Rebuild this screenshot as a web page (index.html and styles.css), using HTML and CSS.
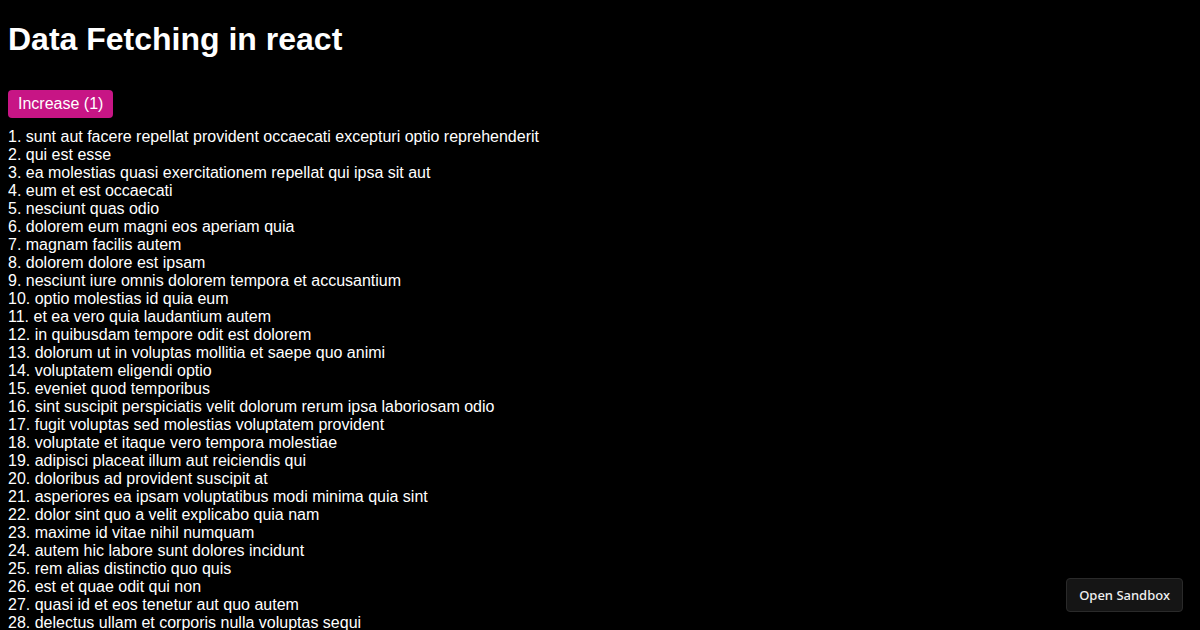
FILE: index.html
```html
<!DOCTYPE html>
<html lang="en">
<head>
  <meta charset="UTF-8">
  <meta name="viewport" content="width=device-width, initial-scale=1.0">
  <title>Data Fetching in react</title>
  <link rel="stylesheet" href="styles.css">
</head>
<body>
  <div class="app">
    <h1>Data Fetching in react</h1>
    <button class="increase-btn">Increase (1)</button>
    <div class="posts">
      <div class="post">1. sunt aut facere repellat provident occaecati excepturi optio reprehenderit</div>
      <div class="post">2. qui est esse</div>
      <div class="post">3. ea molestias quasi exercitationem repellat qui ipsa sit aut</div>
      <div class="post">4. eum et est occaecati</div>
      <div class="post">5. nesciunt quas odio</div>
      <div class="post">6. dolorem eum magni eos aperiam quia</div>
      <div class="post">7. magnam facilis autem</div>
      <div class="post">8. dolorem dolore est ipsam</div>
      <div class="post">9. nesciunt iure omnis dolorem tempora et accusantium</div>
      <div class="post">10. optio molestias id quia eum</div>
      <div class="post">11. et ea vero quia laudantium autem</div>
      <div class="post">12. in quibusdam tempore odit est dolorem</div>
      <div class="post">13. dolorum ut in voluptas mollitia et saepe quo animi</div>
      <div class="post">14. voluptatem eligendi optio</div>
      <div class="post">15. eveniet quod temporibus</div>
      <div class="post">16. sint suscipit perspiciatis velit dolorum rerum ipsa laboriosam odio</div>
      <div class="post">17. fugit voluptas sed molestias voluptatem provident</div>
      <div class="post">18. voluptate et itaque vero tempora molestiae</div>
      <div class="post">19. adipisci placeat illum aut reiciendis qui</div>
      <div class="post">20. doloribus ad provident suscipit at</div>
      <div class="post">21. asperiores ea ipsam voluptatibus modi minima quia sint</div>
      <div class="post">22. dolor sint quo a velit explicabo quia nam</div>
      <div class="post">23. maxime id vitae nihil numquam</div>
      <div class="post">24. autem hic labore sunt dolores incidunt</div>
      <div class="post">25. rem alias distinctio quo quis</div>
      <div class="post">26. est et quae odit qui non</div>
      <div class="post">27. quasi id et eos tenetur aut quo autem</div>
      <div class="post">28. delectus ullam et corporis nulla voluptas sequi</div>
      <div class="post">29. iusto eius quod necessitatibus culpa ea</div>
      <div class="post">30. a quo magni similique perferendis</div>
    </div>
  </div>

  <a class="sandbox-btn" href="#">Open Sandbox</a>
</body>
</html>
```

FILE: styles.css
```css
body {
  margin: 8px;
  background: #000;
  color: #fff;
  font-family: 'Liberation Sans', Arial, sans-serif;
  font-size: 16px;
}
h1 {
  font-size: 32px;
  font-weight: bold;
  margin: 13.44px 0 21.44px;
}
.increase-btn {
  display: block;
  margin: 31.44px 0 10px;
  padding: 5px 10px;
  background: #c71585;
  color: #fff;
  border: none;
  border-radius: 4px;
  font-family: inherit;
  font-size: 16px;
  line-height: 18px;
  cursor: pointer;
}
.posts { line-height: 18px; }
.sandbox-btn {
  position: fixed;
  right: 17px;
  bottom: 18px;
  padding: 9px 12px;
  background: #151515;
  border: 1px solid #2a2a2a;
  border-radius: 4px;
  color: #f0f0f0;
  font-family: 'Noto Sans', 'Open Sans', sans-serif;
  font-size: 13px;
  font-weight: 500;
  line-height: 14px;
  text-decoration: none;
}
```
